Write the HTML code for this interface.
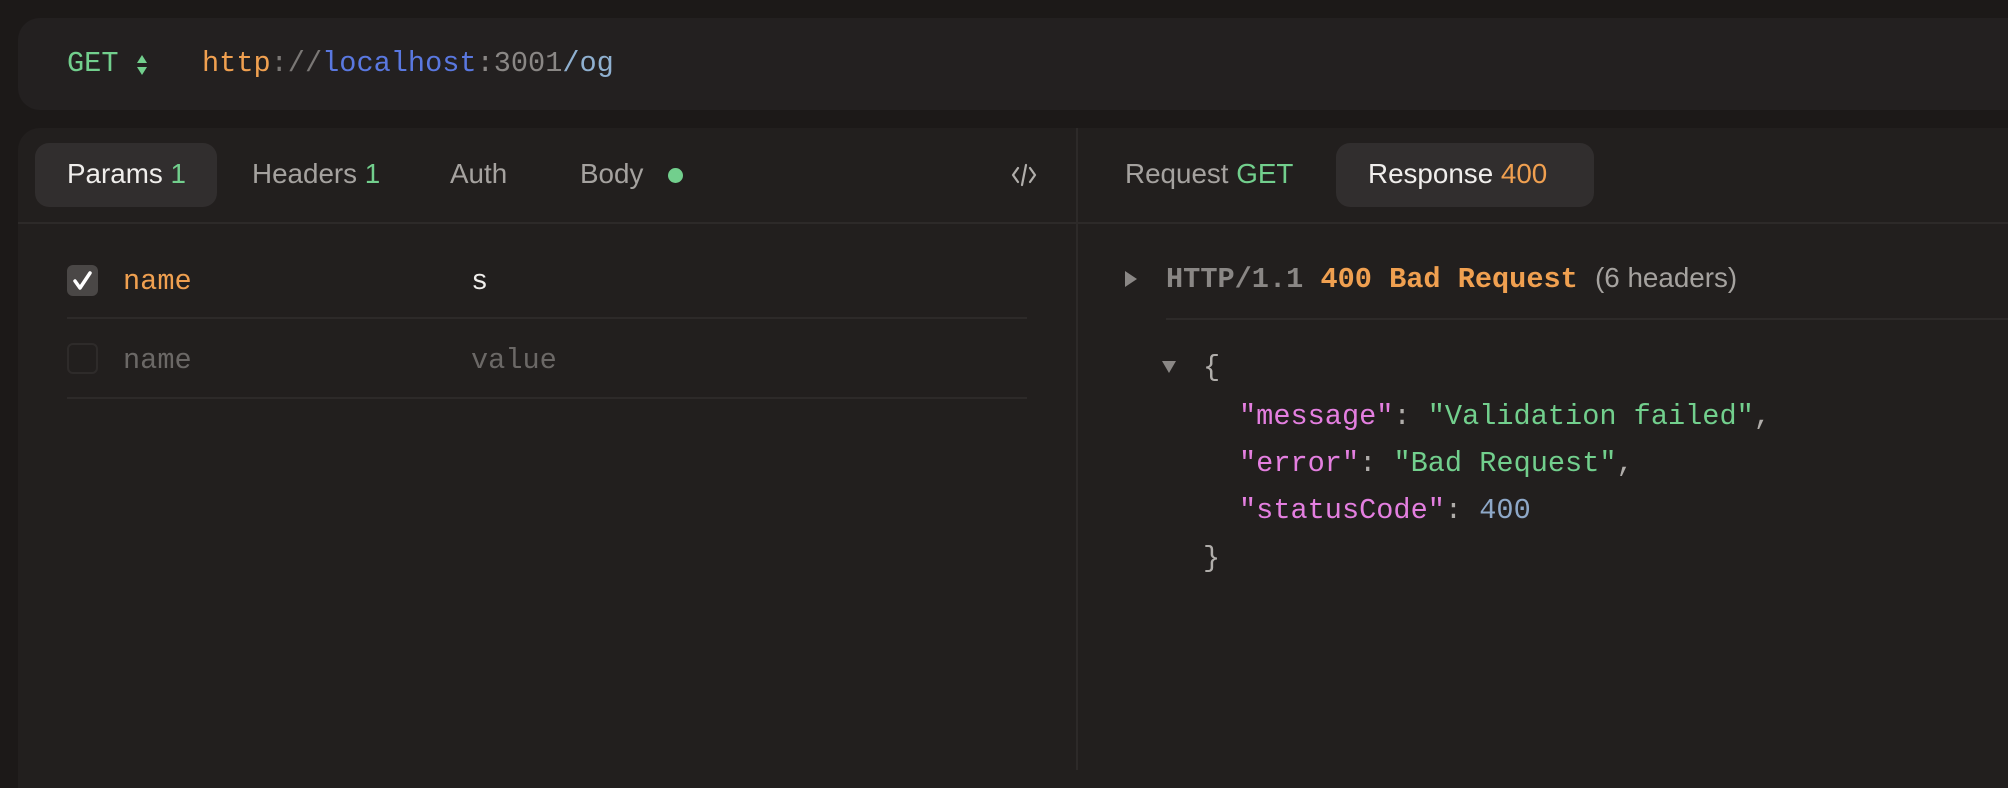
<!DOCTYPE html>
<html><head><meta charset="utf-8"><style>
*{margin:0;padding:0;box-sizing:border-box}
body{width:2008px;height:770px;background:#1c1918;position:relative;overflow:hidden;font-family:"Liberation Sans",sans-serif}
.abs{position:absolute;white-space:nowrap}
.mono{font-family:"Liberation Mono",monospace;font-size:28.6px}
.sans{font-size:27.8px}
#url{left:18px;top:18px;width:2020px;height:92px;background:#232020;border-radius:22px}
#panel{left:18px;top:128px;width:2020px;height:660px;background:#221f1e;border-radius:22px 0 0 0}
.pill{background:#312e2e;border-radius:14px;height:64px;top:143px}
.hl{height:2px;background:#2d2a29}
</style></head><body>
<div id="url" class="abs"></div>
<div class="abs mono" style="left:67px;top:47px;color:#72cf8d">GET</div>
<svg class="abs" style="left:135px;top:53px" width="14" height="24" viewBox="0 0 14 24"><path d="M7 2 L12 10 H2Z M7 22 L12 14 H2Z" fill="#72cf8d"/></svg>
<div class="abs mono" style="left:202px;top:47px"><span style="color:#f0a050">http</span><span style="color:#7a7775">://</span><span style="color:#5a78e0">localhost</span><span style="color:#8a8785">:3001</span><span style="color:#8fb0d0">/og</span></div>

<div id="panel" class="abs"></div>
<div class="abs" style="left:1076px;top:128px;width:2px;height:642px;background:#2d2a29"></div>
<div class="abs hl" style="left:18px;top:222px;width:1990px"></div>

<div class="abs pill" style="left:35px;width:182px"></div>
<div class="abs sans" style="left:67px;top:158px;color:#f0eeec">Params <span style="color:#72cf8d">1</span></div>
<div class="abs sans" style="left:252px;top:158px;color:#a5a29f">Headers <span style="color:#72cf8d">1</span></div>
<div class="abs sans" style="left:450px;top:158px;color:#a5a29f">Auth</div>
<div class="abs sans" style="left:580px;top:158px;color:#a5a29f">Body</div>
<div class="abs" style="left:668px;top:168px;width:15px;height:15px;border-radius:50%;background:#72cf8d"></div>
<svg class="abs" style="left:1010px;top:162px" width="28" height="26" viewBox="0 0 28 26"><path d="M8 6 L3 13 L8 20 M20 6 L25 13 L20 20 M16 3 L12 23" stroke="#b0adaa" stroke-width="2.2" fill="none" stroke-linecap="round" stroke-linejoin="round"/></svg>

<div class="abs" style="left:67px;top:265px;width:31px;height:31px;border-radius:6px;background:#4a4746"></div>
<svg class="abs" style="left:67px;top:265px" width="31" height="31" viewBox="0 0 31 31"><path d="M8 16 L13 23 L23 8" stroke="#fff" stroke-width="3.5" fill="none" stroke-linecap="round" stroke-linejoin="round"/></svg>
<div class="abs mono" style="left:123px;top:265px;color:#f0a050">name</div>
<div class="abs mono" style="left:471px;top:265px;color:#f0eeec">s</div>
<div class="abs hl" style="left:67px;top:317px;width:960px"></div>
<div class="abs" style="left:67px;top:343px;width:31px;height:31px;border-radius:6px;border:2px solid #2e2b2a"></div>
<div class="abs mono" style="left:123px;top:344px;color:#6b6866">name</div>
<div class="abs mono" style="left:471px;top:344px;color:#6b6866">value</div>
<div class="abs hl" style="left:67px;top:397px;width:960px"></div>

<div class="abs sans" style="left:1125px;top:158px;color:#a5a29f">Request <span style="color:#72cf8d">GET</span></div>
<div class="abs pill" style="left:1336px;width:258px"></div>
<div class="abs sans" style="left:1368px;top:158px;color:#f0eeec">Response <span style="color:#f0a050">400</span></div>

<svg class="abs" style="left:1124px;top:270px" width="14" height="18" viewBox="0 0 14 18"><path d="M1 1 L13 9 L1 17Z" fill="#8a8785"/></svg>
<div class="abs mono" style="left:1166px;top:262px;color:#8a8785;font-weight:bold">HTTP/1.1 <span style="color:#f0a050">400 Bad Request</span> <span style="font-family:'Liberation Sans',sans-serif;font-weight:normal;font-size:27.8px;color:#a5a29f">(6 headers)</span></div>
<div class="abs hl" style="left:1166px;top:318px;width:842px"></div>
<svg class="abs" style="left:1161px;top:360px" width="16" height="14" viewBox="0 0 16 14"><path d="M1 1 H15 L8 13Z" fill="#8a8785"/></svg>
<div class="abs mono" style="left:1203px;top:351px;color:#b0adaa">{</div>
<div class="abs mono" style="left:1239px;top:400px;color:#b0adaa"><span style="color:#e47fe0">"message"</span>: <span style="color:#72cf8d">"Validation failed"</span>,</div>
<div class="abs mono" style="left:1239px;top:447px;color:#b0adaa"><span style="color:#e47fe0">"error"</span>: <span style="color:#72cf8d">"Bad Request"</span>,</div>
<div class="abs mono" style="left:1239px;top:494px;color:#b0adaa"><span style="color:#e47fe0">"statusCode"</span>: <span style="color:#8ea8c8">400</span></div>
<div class="abs mono" style="left:1203px;top:542px;color:#b0adaa">}</div>
</body></html>
